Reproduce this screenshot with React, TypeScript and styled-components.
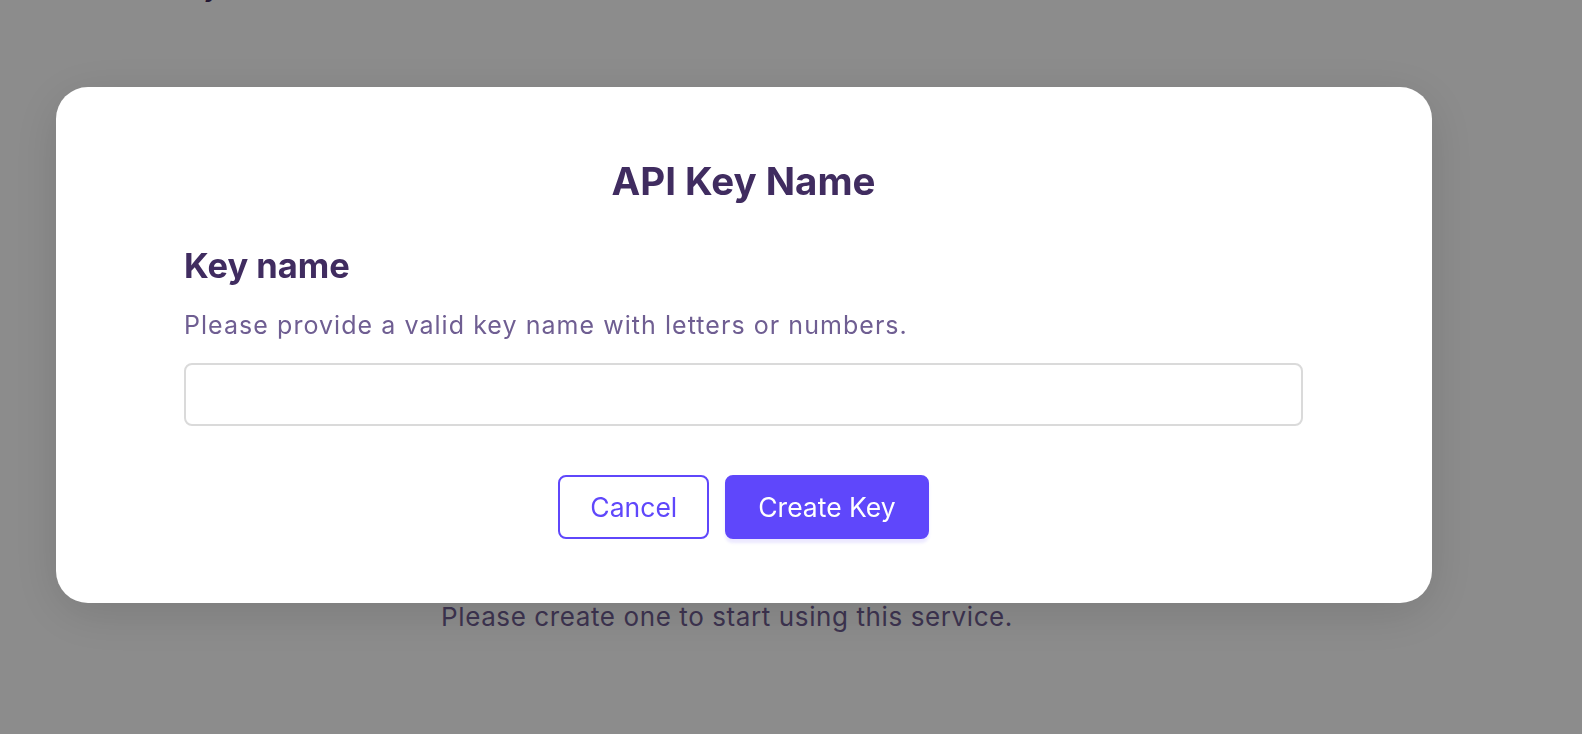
import styled, { createGlobalStyle } from "styled-components";

const GlobalStyle = createGlobalStyle`
  html, body {
    margin: 0;
    padding: 0;
    background: #ffffff;
    font-family: Inter, "Noto Sans", "Liberation Sans", sans-serif;
    overflow: hidden;
  }
  * { box-sizing: border-box; }
`;

const Page = styled.div`
  min-height: 100vh;
  padding: 0 128px 0 0;
  display: flex;
  flex-direction: column;
`;

const PageTitle = styled.h1`
  margin: -26px 0 0 128px;
  font-size: 24px;
  line-height: 29px;
  font-weight: 700;
  color: #402c60;
`;

const EmptyText = styled.p`
  margin: 598px 0 0;
  text-align: center;
  font-size: 26px;
  line-height: 31px;
  letter-spacing: 0.6px;
  color: #6f5e92;
`;

const Overlay = styled.div`
  position: fixed;
  inset: 0;
  background: rgba(0, 0, 0, 0.45);
  padding: 87px 0 0 56px;
`;

const Modal = styled.div`
  width: 1376px;
  background: #ffffff;
  border-radius: 32px;
  padding: 71px 129px 64px 128px;
  box-shadow: 0 10px 50px rgba(0, 0, 0, 0.13);
  display: flex;
  flex-direction: column;
`;

const ModalTitle = styled.h2`
  margin: 0;
  text-align: center;
  font-size: 38.5px;
  line-height: 46px;
  font-weight: 700;
  color: #402c60;
`;

const FieldLabel = styled.label`
  margin-top: 41px;
  font-size: 34.5px;
  line-height: 41px;
  font-weight: 700;
  color: #402c60;
`;

const FieldHint = styled.p`
  margin: 25px 0 0;
  font-size: 25px;
  line-height: 29px;
  letter-spacing: 1.05px;
  color: #6f5e92;
`;

const TextInput = styled.input`
  margin-top: 23px;
  height: 63px;
  width: 100%;
  border: 2px solid #dadada;
  border-radius: 8px;
  padding: 0 18px;
  font: inherit;
  font-size: 24px;
  outline: none;
`;

const Actions = styled.div`
  margin-top: 49px;
  display: flex;
  justify-content: center;
  gap: 16px;
`;

const Button = styled.button<{ $primary?: boolean }>`
  height: 64px;
  padding: 0 ${(p) => (p.$primary ? "31px" : "30px")};
  border-radius: 8px;
  font-family: inherit;
  font-size: 26.5px;
  font-weight: 400;
  cursor: pointer;
  border: 2px solid #5f47fb;
  background: ${(p) => (p.$primary ? "#5f47fb" : "#ffffff")};
  color: ${(p) => (p.$primary ? "#ffffff" : "#5f47fb")};
  box-shadow: ${(p) =>
    p.$primary ? "0 4px 3px rgba(95, 71, 251, 0.12)" : "none"};
`;

export default function App() {
  return (
    <>
      <GlobalStyle />
      <Page>
        <PageTitle>API Keys</PageTitle>
        <EmptyText>Please create one to start using this service.</EmptyText>
      </Page>
      <Overlay>
        <Modal>
          <ModalTitle>API Key Name</ModalTitle>
          <FieldLabel htmlFor="key-name">Key name</FieldLabel>
          <FieldHint>Please provide a valid key name with letters or numbers.</FieldHint>
          <TextInput id="key-name" type="text" />
          <Actions>
            <Button>Cancel</Button>
            <Button $primary>Create Key</Button>
          </Actions>
        </Modal>
      </Overlay>
    </>
  );
}
